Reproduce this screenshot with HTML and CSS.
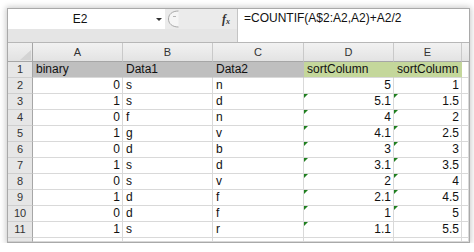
FILE: index.html
```html
<!DOCTYPE html>
<html lang="en">
<head>
<meta charset="UTF-8">
<meta name="viewport" content="width=device-width, initial-scale=1.0">
<title>Sort Column</title>
<link rel="stylesheet" href="styles.css">
</head>
<body>

<div class="window">
  <div class="formula-bar">
    <div class="left-box">
      <div class="top-row">
        <div class="name-box">
          <span class="name">E2</span>
          <span class="arrow"></span>
        </div>
        <div class="controls">
          <svg class="grip" width="12" height="18" viewBox="0 0 12 18">
            <path d="M11.5 1 C5 1 1.5 4.5 1.5 9 C1.5 13.5 5 17 11.5 17" fill="#f5f5f5" stroke="#a8a8a8"/>
            <path d="M6 6.5 H9" stroke="#b4b4b4"/>
          </svg>
          <span class="fx">f<sub>x</sub></span>
        </div>
      </div>
      <div class="band"></div>
    </div>
    <div class="formula">=COUNTIF(A$2:A2,A2)+A2/2</div>
  </div>

  <div class="sheet">
    <div class="corner"></div>
    <div class="ch">A</div><div class="ch">B</div><div class="ch">C</div><div class="ch">D</div><div class="ch">E</div><div class="ch stub"></div>

    <div class="rh">1</div>
    <div class="cell gray">binary</div><div class="cell gray">Data1</div><div class="cell gray">Data2</div>
    <div class="cell green">sortColumn</div><div class="cell green">sortColumn</div><div class="cell"></div>

    <div class="rh">2</div>
    <div class="cell num">0</div><div class="cell">s</div><div class="cell">n</div>
    <div class="cell num">5</div><div class="cell num">1</div><div class="cell"></div>

    <div class="rh">3</div>
    <div class="cell num">1</div><div class="cell">s</div><div class="cell">d</div>
    <div class="cell num warn">5.1</div><div class="cell num warn">1.5</div><div class="cell"></div>

    <div class="rh">4</div>
    <div class="cell num">0</div><div class="cell">f</div><div class="cell">n</div>
    <div class="cell num warn">4</div><div class="cell num warn">2</div><div class="cell"></div>

    <div class="rh">5</div>
    <div class="cell num">1</div><div class="cell">g</div><div class="cell">v</div>
    <div class="cell num warn">4.1</div><div class="cell num warn">2.5</div><div class="cell"></div>

    <div class="rh">6</div>
    <div class="cell num">0</div><div class="cell">d</div><div class="cell">b</div>
    <div class="cell num warn">3</div><div class="cell num warn">3</div><div class="cell"></div>

    <div class="rh">7</div>
    <div class="cell num">1</div><div class="cell">s</div><div class="cell">d</div>
    <div class="cell num warn">3.1</div><div class="cell num warn">3.5</div><div class="cell"></div>

    <div class="rh">8</div>
    <div class="cell num">0</div><div class="cell">s</div><div class="cell">v</div>
    <div class="cell num warn">2</div><div class="cell num warn">4</div><div class="cell"></div>

    <div class="rh">9</div>
    <div class="cell num">1</div><div class="cell">d</div><div class="cell">f</div>
    <div class="cell num warn">2.1</div><div class="cell num warn">4.5</div><div class="cell"></div>

    <div class="rh">10</div>
    <div class="cell num">0</div><div class="cell">d</div><div class="cell">f</div>
    <div class="cell num warn">1</div><div class="cell num warn">5</div><div class="cell"></div>

    <div class="rh">11</div>
    <div class="cell num">1</div><div class="cell">s</div><div class="cell">r</div>
    <div class="cell num warn">1.1</div><div class="cell num">5.5</div><div class="cell"></div>

    <div class="rh">12</div>
    <div class="cell"></div><div class="cell"></div><div class="cell"></div>
    <div class="cell"></div><div class="cell"></div><div class="cell"></div>
  </div>
</div>

</body>
</html>
```

FILE: styles.css
```css
body {
  margin: 0;
  background-color: #fff;
  font-family: "Liberation Sans", Arial, sans-serif;
  color: #111;
}

.window {
  width: 463px;
  height: 235px;
  margin: 8px 0 0 7px;
  box-sizing: border-box;
  border: 1px solid #a9a9a9;
  box-shadow: 0 0 6px 1px rgba(0, 0, 0, 0.22);
  background-color: #fff;
  overflow: hidden;
  display: flex;
  flex-direction: column;
}

/* formula bar */
.formula-bar {
  display: flex;
  height: 34px;
  flex-shrink: 0;
  box-sizing: border-box;
  border-bottom: 1px solid #b7b7b7;
}

.left-box {
  width: 229px;
  display: flex;
  flex-direction: column;
  background-color: #e5e5e5;
}

.top-row {
  display: flex;
  height: 20px;
}

.name-box {
  width: 157px;
  background-color: #fff;
  display: flex;
  align-items: center;
}

.name {
  flex: 1;
  text-align: center;
  font-size: 12px;
  line-height: 14px;
}

.arrow {
  width: 13px;
  display: flex;
  justify-content: center;
}

.arrow::before {
  content: "";
  border-left: 3px solid transparent;
  border-right: 3px solid transparent;
  border-top: 3px solid #333;
}

.controls {
  flex: 1;
  display: flex;
  align-items: center;
  padding-left: 2px;
  background-color: #ebebeb;
}

.fx {
  margin-left: auto;
  margin-right: 7px;
  font-family: "Liberation Serif", serif;
  font-style: italic;
  font-weight: bold;
  font-size: 12px;
  color: #333;
}

.fx sub {
  font-size: 8px;
  vertical-align: -1px;
}

.band {
  flex: 1;
}

.formula {
  flex: 1;
  background-color: #fff;
  border-left: 1px solid #c4c4c4;
  padding: 2px 0 0 6px;
  font-size: 12px;
  line-height: 14px;
}

/* sheet grid */
.sheet {
  flex: 1;
  display: grid;
  grid-template-columns: 25px 90px 90px 91px 90px 68px 1fr;
  grid-template-rows: 19px repeat(11, 16px) 1fr;
  overflow: hidden;
}

.sheet > div {
  box-sizing: border-box;
  overflow: hidden;
  white-space: nowrap;
}

.corner {
  position: relative;
  background: linear-gradient(#f0f0f0, #e2e2e2);
  border-right: 1px solid #a6a6a6;
  border-bottom: 1px solid #a6a6a6;
}

.corner::after {
  content: "";
  position: absolute;
  right: 1px;
  bottom: 1px;
  border-left: 11px solid transparent;
  border-bottom: 10px solid #d3d3d3;
}

.ch {
  background: linear-gradient(#f2f2f2, #e3e3e3);
  border-right: 1px solid #c9c9c9;
  border-bottom: 1px solid #a6a6a6;
  text-align: center;
  font-size: 11px;
  line-height: 18px;
  color: #333;
}

.ch.stub {
  border-right: none;
}

.rh {
  background-color: #e6e6e6;
  border-right: 1px solid #a6a6a6;
  border-bottom: 1px solid #cfcfcf;
  text-align: center;
  font-size: 11px;
  line-height: 15px;
  color: #333;
}

.cell {
  border-right: 1px solid #d9d9d9;
  border-bottom: 1px solid #d9d9d9;
  padding: 0 2px 0 3px;
  font-size: 12px;
  line-height: 15px;
}

.num {
  text-align: right;
}

.gray {
  background-color: #bfbfbf;
  border-right-color: #bfbfbf;
}

.green {
  background-color: #c4d79b;
  border-right-color: #c4d79b;
}

.warn {
  position: relative;
}

.warn::before {
  content: "";
  position: absolute;
  left: 0;
  top: 0;
  border-top: 4px solid #1f7f1f;
  border-right: 4px solid transparent;
}
```
